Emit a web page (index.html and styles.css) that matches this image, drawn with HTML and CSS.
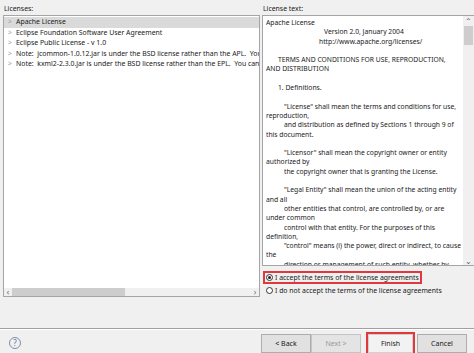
FILE: index.html
```html
<!DOCTYPE html>
<html lang="en">
<head>
    <meta charset="UTF-8">
    <title>Review Licenses</title>
    <link rel="stylesheet" href="styles.css">
</head>
<body>

<div class="top">
    <div class="panes">
        <div class="pane">
            <div class="label">Licenses:</div>
            <div class="list">
                <div class="rows">
                    <div class="row sel"><span class="chev">&gt;</span>Apache License</div>
                    <div class="row"><span class="chev">&gt;</span>Eclipse Foundation Software User Agreement</div>
                    <div class="row"><span class="chev">&gt;</span>Eclipse Public License - v 1.0</div>
                    <div class="row"><span class="chev">&gt;</span>Note:&nbsp; jcommon-1.0.12.jar is under the BSD license rather than the APL.&nbsp; You can find</div>
                    <div class="row"><span class="chev">&gt;</span>Note:&nbsp; kxml2-2.3.0.jar is under the BSD license rather than the EPL.&nbsp; You can find</div>
                </div>
                <div class="hscroll">
                    <span class="arrow">&lsaquo;</span>
                    <div class="track"><div class="thumb"></div></div>
                    <span class="arrow">&rsaquo;</span>
                </div>
            </div>
        </div>

        <div class="pane">
            <div class="label">License text:</div>
            <div class="textbox">
                <div class="text">
                    <div class="ln">Apache License</div>
                    <div class="ln center1">Version 2.0, January 2004</div>
                    <div class="ln center2">http://www.apache.org/licenses/</div>
                    <div class="ln"></div>
                    <div class="ln in1">TERMS AND CONDITIONS FOR USE, REPRODUCTION,</div>
                    <div class="ln">AND DISTRIBUTION</div>
                    <div class="ln"></div>
                    <div class="ln in1">1. Definitions.</div>
                    <div class="ln"></div>
                    <div class="ln in2">"License" shall mean the terms and conditions for use,</div>
                    <div class="ln">reproduction,</div>
                    <div class="ln in2">and distribution as defined by Sections 1 through 9 of</div>
                    <div class="ln">this document.</div>
                    <div class="ln"></div>
                    <div class="ln in2">"Licensor" shall mean the copyright owner or entity</div>
                    <div class="ln">authorized by</div>
                    <div class="ln in2">the copyright owner that is granting the License.</div>
                    <div class="ln"></div>
                    <div class="ln in2">"Legal Entity" shall mean the union of the acting entity</div>
                    <div class="ln">and all</div>
                    <div class="ln in2">other entities that control, are controlled by, or are</div>
                    <div class="ln">under common</div>
                    <div class="ln in2">control with that entity. For the purposes of this</div>
                    <div class="ln">definition,</div>
                    <div class="ln in2">"control" means (i) the power, direct or indirect, to cause</div>
                    <div class="ln">the</div>
                    <div class="ln in2">direction or management of such entity, whether by</div>
                </div>
                <div class="vscroll">
                    <span class="varrow">&#8963;</span>
                    <div class="vthumb"></div>
                    <div class="vtrack"></div>
                    <span class="varrow">&#8964;</span>
                </div>
            </div>

            <div class="choices">
                <label class="choice marked"><span class="radio on"></span>I accept the terms of the license agreements</label>
                <label class="choice"><span class="radio"></span>I do not accept the terms of the license agreements</label>
            </div>
        </div>
    </div>
</div>

<div class="sep"></div>

<div class="footer">
    <span class="help">?</span>
    <div class="buttons">
        <div class="pair">
            <button class="btn">&lt; Back</button>
            <button class="btn off">Next &gt;</button>
        </div>
        <div class="marked-btn"><button class="btn finish">Finish</button></div>
        <button class="btn">Cancel</button>
    </div>
</div>

</body>
</html>
```

FILE: styles.css
```css
body {
    margin: 0;
    width: 474px;
    height: 353px;
    overflow: hidden;
    background-color: #f0f0f0;
    font-family: "Noto Sans", Arial, sans-serif;
    font-size: 6.9px;
    color: #1a1a1a;
}

.top {
    height: 328px;
}

.panes {
    display: grid;
    grid-template-columns: 257px 213px;
    column-gap: 2px;
    padding-left: 3px;
}

.label {
    height: 14px;
    padding-top: 1px;
    line-height: 15px;
    padding-left: 1px;
}

/* left list */
.list {
    height: 280px;
    border: 1px solid #a5a5a5;
    background-color: white;
    display: flex;
    flex-direction: column;
}

.rows {
    flex: 1;
    padding-top: 1px;
}

.row {
    height: 10.5px;
    line-height: 10.5px;
    white-space: nowrap;
    overflow: hidden;
    padding-left: 1px;
}

.row.sel {
    background-color: #dadada;
}

.chev {
    display: inline-block;
    width: 8px;
    padding-left: 3px;
    color: #9a9a9a;
    font-size: 6.5px;
}

.hscroll {
    height: 8px;
    display: flex;
    align-items: center;
    background-color: #f0f0f0;
}

.arrow {
    width: 8px;
    text-align: center;
    color: #606060;
    font-size: 8px;
    line-height: 8px;
}

.track {
    flex: 1;
    height: 8px;
}

.thumb {
    width: 113px;
    height: 8px;
    background-color: #cdcdcd;
}

/* right text */
.textbox {
    height: 249px;
    border: 1px solid #a5a5a5;
    background-color: white;
    display: flex;
}

.text {
    flex: 1;
    padding: 2px 0 0 3px;
    overflow: hidden;
    white-space: nowrap;
    font-size: 6.75px;
}

.ln {
    height: 9.3px;
    line-height: 9.3px;
}

.in1 { padding-left: 12px; }
.in2 { padding-left: 18px; }
.center1 { padding-left: 58px; }
.center2 { padding-left: 53px; }

.vscroll {
    width: 11px;
    flex-shrink: 0;
    background-color: #f0f0f0;
    display: flex;
    flex-direction: column;
}

.varrow {
    height: 9px;
    text-align: center;
    color: #606060;
    font-size: 8px;
    line-height: 9px;
}

.vthumb {
    height: 19px;
    margin: 1px 1px 0;
    background-color: #cdcdcd;
}

.vtrack {
    flex: 1;
}

.choices {
    margin-top: 5px;
    margin-left: 1px;
}

.choice {
    display: flex;
    align-items: center;
    gap: 2px;
    height: 9px;
    padding-left: 1px;
    border: 2px solid transparent;
    white-space: nowrap;
}

.choice.marked {
    width: 154px;
    border-color: #e2383d;
}

.radio {
    flex-shrink: 0;
    width: 5px;
    height: 5px;
    border: 1px solid #333;
    border-radius: 50%;
    background-color: white;
    display: flex;
    align-items: center;
    justify-content: center;
}

.radio.on::after {
    content: "";
    width: 3px;
    height: 3px;
    border-radius: 50%;
    background-color: #222;
}

/* bottom bar */
.sep {
    border-top: 1px solid #a0a0a0;
    border-bottom: 1px solid white;
}

.footer {
    display: flex;
    justify-content: space-between;
    align-items: flex-start;
    padding: 4px 7px 0 9px;
}

.help {
    margin-top: 3px;
    width: 10px;
    height: 10px;
    border: 1px solid #7d8ea6;
    border-radius: 50%;
    color: #5d7496;
    font-size: 8px;
    line-height: 10px;
    text-align: center;
}

.buttons {
    display: flex;
    align-items: flex-start;
    gap: 2px;
}

.pair {
    display: flex;
    margin-right: 3px;
}

.btn {
    width: 50px;
    height: 19px;
    padding: 0;
    border: 1px solid #adadad;
    background-color: #e1e1e1;
    font-family: "Noto Sans", Arial, sans-serif;
    font-size: 7px;
    line-height: 17px;
    color: #1a1a1a;
}

.btn.off {
    color: #9a9a9a;
    background-color: #e4e4e4;
    border-color: #c4c4c4;
}

.marked-btn {
    display: flex;
    border: 2px solid #e2383d;
    margin-top: -2px;
}

.btn.finish {
    width: 45px;
    border-color: #d0d0d0;
    background-color: #f2f2f2;
}
```
